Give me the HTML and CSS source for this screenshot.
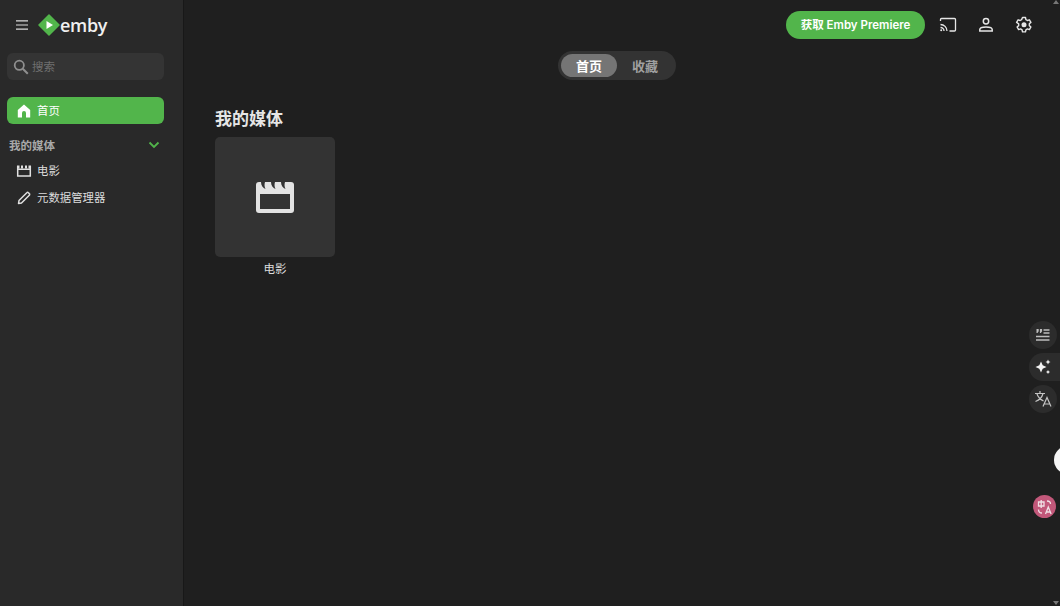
FILE: index.html
```html
<!DOCTYPE html>
<html>
  <head>
    <title>Emby</title>
    <link rel="stylesheet" href="styles.css">
  </head>
  <body>
    <div class="sidebar">
      <div class="brand">
        <svg class="menuIcon" width="18" height="18" viewBox="0 0 18 18"><path d="M3 4.800h12M3 9h12M3 13.200h12" stroke="#dcdcdc" stroke-width="1.200" fill="none"/></svg>
        <svg class="logo" width="22" height="22" viewBox="0 0 22 22"><path d="M11 1 21 11 11 21 1 11z" fill="#52b54b" stroke="#52b54b" stroke-width="1.500" stroke-linejoin="round"/><path d="M8.500 7 15 11 8.500 15z" fill="#fff"/></svg>
        <span class="brandName">emby</span>
      </div>
      <div class="search">
        <svg width="18" height="18" viewBox="0 0 18 18"><circle cx="7.300" cy="7.300" r="4.600" stroke="#8f8f8f" stroke-width="1.800" fill="none"/><path d="m10.800 10.800 5 5" stroke="#8f8f8f" stroke-width="2" fill="none"/></svg>
        <span>搜索</span>
      </div>
      <div class="navItem navHome">
        <svg width="16" height="16" viewBox="0 0 16 16"><path d="M8 1.500 14.200 7v7.500H10V10a2 2 0 0 0-4 0v4.500H1.800V7z" fill="#fff"/></svg>
        <span>首页</span>
      </div>
      <div class="navHeading">
        <span>我的媒体</span>
        <svg width="12" height="8" viewBox="0 0 12 8"><path d="m1.500 1.500 4.500 4.500 4.500-4.500" stroke="#52b54b" stroke-width="1.800" fill="none"/></svg>
      </div>
      <div class="navItem">
        <svg width="16" height="16" viewBox="0 0 16 16"><path d="M1.700 3v10h12.600V3M1.700 6.300h12.600" stroke="#e0e0e0" stroke-width="1.500" fill="none"/><path d="M1 2.500h2.500v3H1zM5 2.500h2v3H5zM9 2.500h2v3H9zM12.500 2.500H15v3h-2.500z" fill="#e0e0e0"/></svg>
        <span>电影</span>
      </div>
      <div class="navItem">
        <svg width="16" height="16" viewBox="0 0 16 16"><path d="M2.500 13.500 3 10.500 10.800 2.700a1.100 1.100 0 0 1 1.600 0l.9.900a1.100 1.100 0 0 1 0 1.600L5.500 13z" stroke="#e0e0e0" stroke-width="1.500" stroke-linejoin="round" fill="none"/></svg>
        <span>元数据管理器</span>
      </div>
    </div>

    <div class="main">
      <div class="topbar">
        <button class="premiere">获取 Emby Premiere</button>
        <svg class="topIcon" width="20" height="20" viewBox="0 0 20 20"><path d="M2.500 6V4.500a1 1 0 0 1 1-1h13a1 1 0 0 1 1 1v10.500a1 1 0 0 1-1 1h-5" stroke="#e6e6e6" stroke-width="1.300" fill="none"/><path d="M2.500 9.500a6.500 6.500 0 0 1 6.500 6.500M2.500 12.500a3.500 3.500 0 0 1 3.500 3.500" stroke="#e6e6e6" stroke-width="1.300" fill="none"/><circle cx="3.200" cy="15.300" r="1" fill="#e6e6e6"/></svg>
        <svg class="topIcon" width="20" height="20" viewBox="0 0 20 20"><circle cx="10" cy="6.300" r="2.700" stroke="#e6e6e6" stroke-width="1.500" fill="none"/><path d="M3.800 15.900v-1.300c0-1.800 3.600-2.700 6.200-2.700s6.200.9 6.200 2.700v1.300z" stroke="#e6e6e6" stroke-width="1.500" fill="none"/></svg>
        <svg class="topIcon" width="20" height="20" viewBox="0 0 20 20"><path d="M8.500 2.500h3l.4 2.100 1.500.9 2-.7 1.500 2.600-1.600 1.400v1.800l1.600 1.400-1.500 2.600-2-.7-1.500.9-.4 2.100h-3l-.4-2.100-1.500-.9-2 .7-1.500-2.600 1.600-1.400V8.800L2.600 7.400l1.500-2.600 2 .7 1.500-.9z" stroke="#e6e6e6" stroke-width="1.400" stroke-linejoin="round" fill="none"/><circle cx="10" cy="9.700" r="2.500" fill="#e6e6e6"/></svg>
      </div>

      <div class="tabsRow">
        <div class="tabs">
          <span class="tab tabActive">首页</span>
          <span class="tab">收藏</span>
        </div>
      </div>

      <div class="section">
        <h2 class="sectionTitle">我的媒体</h2>
        <div class="card">
          <div class="cardImage">
            <svg width="38" height="31" viewBox="0 0 38 31"><path d="M3 0h32a3 3 0 0 1 3 3v25a3 3 0 0 1-3 3H3a3 3 0 0 1-3-3V3a3 3 0 0 1 3-3z" fill="#e3e3e3"/><path d="M4 12h30v15H4z" fill="#333333"/><path d="M5 0c0 3.500 2 6 4.500 7C8.300 4.800 8.300 2.300 9 0zM15 0c0 3.500 2 6 4.500 7C18.300 4.800 18.300 2.300 19 0zM25 0c0 3.500 2 6 4.500 7C28.300 4.800 28.300 2.300 29 0z" fill="#333333"/></svg>
          </div>
          <div class="cardLabel">电影</div>
        </div>
      </div>
    </div>

    <div class="floatBtn floatSummary">
      <svg width="16" height="14" viewBox="0 0 16 14"><path d="M8.500 2h6M8.500 5h6M1 8.500h13.500M1 12h13.500" stroke="#bdbdbd" stroke-width="1.300" fill="none"/><path d="M1.500 1h2.200v2.200L2.500 5H1.500zM4.900 1h2.200v2.200L5.900 5h-1z" fill="#bdbdbd"/></svg>
    </div>
    <div class="floatBtn floatSpark">
      <svg width="18" height="18" viewBox="0 0 18 18"><path d="M7 3.500 8.700 7.300 12.500 9 8.700 10.700 7 14.500 5.300 10.700 1.500 9 5.300 7.300z" fill="#f2f2f2"/><path d="M14 1.500 14.800 3.200 16.500 4 14.800 4.800 14 6.500 13.200 4.800 11.500 4 13.200 3.200zM14 12 14.700 13.300 16 14 14.700 14.700 14 16 13.300 14.700 12 14 13.300 13.300z" fill="#f2f2f2"/></svg>
    </div>
    <div class="floatBtn floatTranslate">
      <svg width="18" height="18" viewBox="0 0 18 18"><path d="M1 3.500h10M6 1v2.500M9 3.500C8 7.500 5.500 10 1.500 11.500M3 4c1 3 3.500 5.500 6.500 7M9 16.500 13 7.500l4 9M10.300 14h5.400" stroke="#c4c4c4" stroke-width="1.200" fill="none"/></svg>
    </div>
    <div class="floatWhite"></div>
    <div class="floatPink">
      <svg width="18" height="18" viewBox="0 0 18 18"><path d="M2.500 4h5.500v4H2.500zM5.200 2v8M11 3c2 0 3.500 1.200 3.500 3M2.500 11.500c0 2 1.500 3.500 3.500 3.500M9.500 16l2.800-7 2.800 7M10.500 14h3.600" stroke="#f0dfe5" stroke-width="1.300" fill="none"/></svg>
    </div>
    <div class="scrollUp"></div>
    <div class="scrollDown"></div>
  </body>
</html>
```

FILE: styles.css
```css
* {
  box-sizing: border-box;
}
html, body {
  height: 100%;
}
body {
  margin: 0;
  display: flex;
  overflow: hidden;
  background-color: #1f1f1f;
  color: #e6e6e6;
  font-family: "Inter", "Noto Sans CJK SC", sans-serif;
}
.sidebar {
  width: 184px;
  flex-shrink: 0;
  padding: 0 19px 0 7px;
  background-color: #292929;
  border-right: 1px solid #181818;
}
.brand {
  height: 53px;
  display: flex;
  align-items: center;
  padding: 0 0 3px 6px;
}
.logo {
  margin-left: 7px;
}
.brandName {
  font-family: "Open Sans", sans-serif;
  font-size: 18px;
  font-weight: 600;
  color: #f0f0f0;
  letter-spacing: -0.3px;
}
.search {
  height: 27px;
  display: flex;
  align-items: center;
  gap: 2px;
  padding-left: 5px;
  background-color: #343434;
  border-radius: 6px;
  font-size: 11.5px;
  color: #6f6f6f;
}
.search span, .navItem span {
  margin-bottom: 2px;
}
.navItem {
  height: 27px;
  display: flex;
  align-items: center;
  gap: 5px;
  padding-left: 9px;
  font-size: 11.4px;
  color: #dcdcdc;
}
.navHome {
  margin-top: 17px;
  background-color: #52b54b;
  border-radius: 6px;
  color: #fff;
}
.navHeading {
  height: 25px;
  margin-top: 8px;
  display: flex;
  align-items: center;
  justify-content: space-between;
  padding: 0 4px 0 2px;
  font-size: 11.5px;
  font-weight: 700;
  color: #a8a8a8;
}
.main {
  flex: 1;
  padding-left: 31px;
}
.topbar {
  height: 50px;
  display: flex;
  align-items: center;
  justify-content: flex-end;
  gap: 18px;
  padding-right: 26px;
}
.premiere {
  height: 28px;
  width: 139px;
  margin-right: -5px;
  padding: 0 0 2px;
  border: none;
  border-radius: 14px;
  background-color: #52b54b;
  color: #fff;
  font-family: inherit;
  font-size: 11.5px;
  font-weight: 600;
}
.tabsRow {
  display: flex;
  justify-content: center;
  padding-right: 41px;
  margin-top: 1px;
}
.tabs {
  height: 29px;
  width: 118px;
  display: flex;
  align-items: center;
  padding: 0 3px;
  background-color: #333333;
  border-radius: 15px;
}
.tab {
  width: 56px;
  height: 23px;
  display: flex;
  align-items: center;
  justify-content: center;
  border-radius: 12px;
  font-size: 13px;
  font-weight: 700;
  color: #a0a0a0;
}
.tabActive {
  background-color: #757575;
  color: #fff;
}
.section {
  margin-top: 26px;
}
.sectionTitle {
  margin: 0;
  height: 31px;
  line-height: 26px;
  font-size: 17px;
  font-weight: 700;
  color: #e6e6e6;
}
.card {
  width: 120px;
}
.cardImage {
  height: 120px;
  display: flex;
  align-items: center;
  justify-content: center;
  background-color: #333333;
  border-radius: 5px;
}
.cardLabel {
  margin-top: 3px;
  text-align: center;
  font-size: 11.5px;
  color: #dcdcdc;
}
.floatBtn {
  position: absolute;
  display: flex;
  align-items: center;
  justify-content: center;
  width: 28px;
  height: 28px;
  left: 1029px;
  border-radius: 14px;
  background-color: #2c2c2c;
}
.floatSummary {
  top: 321px;
}
.floatSpark {
  top: 353px;
  width: 40px;
  border-radius: 14px 0 0 14px;
  justify-content: flex-start;
  padding-left: 5px;
}
.floatTranslate {
  top: 385px;
}
.floatWhite {
  position: absolute;
  left: 1054px;
  top: 446px;
  width: 28px;
  height: 28px;
  border-radius: 50%;
  background-color: #f4f4f4;
}
.floatPink {
  position: absolute;
  left: 1033px;
  top: 495px;
  width: 23px;
  height: 23px;
  display: flex;
  align-items: center;
  justify-content: center;
  border-radius: 50%;
  background-color: #c2587a;
}
.scrollUp {
  position: absolute;
  right: 1px;
  top: 0;
  border-left: 3px solid transparent;
  border-right: 3px solid transparent;
  border-bottom: 4px solid #777777;
}
.scrollDown {
  position: absolute;
  right: 1px;
  bottom: 1px;
  border-left: 3px solid transparent;
  border-right: 3px solid transparent;
  border-top: 4px solid #777777;
}
```
